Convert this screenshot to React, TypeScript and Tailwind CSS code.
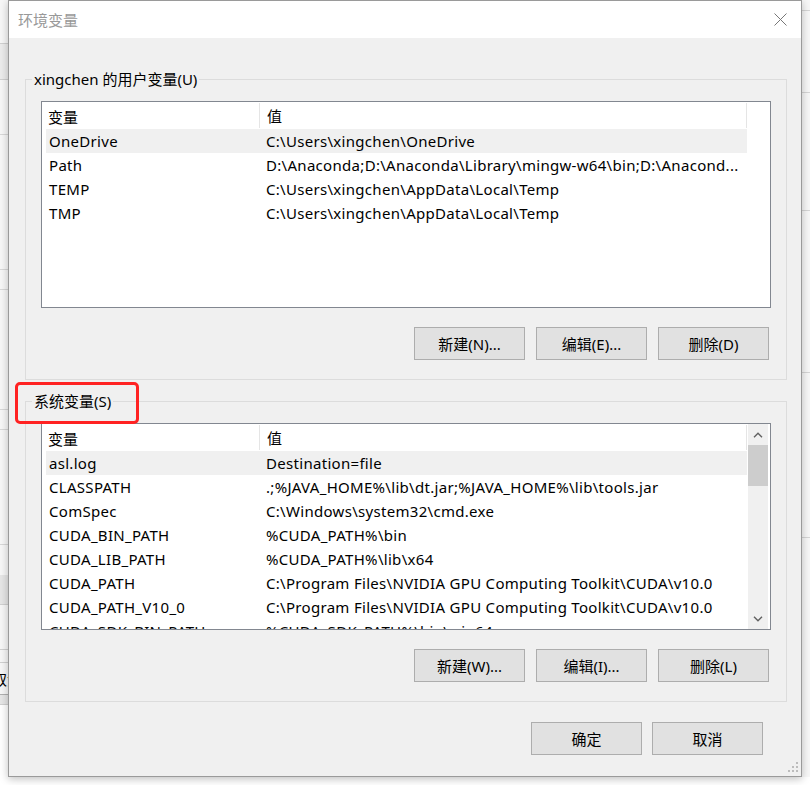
import React from 'react';

type Row = [string, string];

const userVars: Row[] = [
  ['OneDrive', 'C:\\Users\\xingchen\\OneDrive'],
  ['Path', 'D:\\Anaconda;D:\\Anaconda\\Library\\mingw-w64\\bin;D:\\Anacond...'],
  ['TEMP', 'C:\\Users\\xingchen\\AppData\\Local\\Temp'],
  ['TMP', 'C:\\Users\\xingchen\\AppData\\Local\\Temp'],
];

const sysVars: Row[] = [
  ['asl.log', 'Destination=file'],
  ['CLASSPATH', '.;%JAVA_HOME%\\lib\\dt.jar;%JAVA_HOME%\\lib\\tools.jar'],
  ['ComSpec', 'C:\\Windows\\system32\\cmd.exe'],
  ['CUDA_BIN_PATH', '%CUDA_PATH%\\bin'],
  ['CUDA_LIB_PATH', '%CUDA_PATH%\\lib\\x64'],
  ['CUDA_PATH', 'C:\\Program Files\\NVIDIA GPU Computing Toolkit\\CUDA\\v10.0'],
  ['CUDA_PATH_V10_0', 'C:\\Program Files\\NVIDIA GPU Computing Toolkit\\CUDA\\v10.0'],
  ['CUDA_SDK_BIN_PATH', '%CUDA_SDK_PATH%\\bin\\win64'],
];

function WinButton({ label }: { label: string }) {
  return (
    <button className="w-[111px] h-[33px] border border-[#adadad] bg-[#e1e1e1] text-[15px] leading-[20px] text-black">
      {label}
    </button>
  );
}

function Chevron({ up }: { up?: boolean }) {
  return (
    <svg width="10" height="6" viewBox="0 0 10 6" className="block">
      <path
        d={up ? 'M1 5.2 L5 1.2 L9 5.2' : 'M1 0.8 L5 4.8 L9 0.8'}
        fill="none"
        stroke="#606060"
        strokeWidth="1.4"
      />
    </svg>
  );
}

function VarList({ rows, scrollbar }: { rows: Row[]; scrollbar?: boolean }) {
  return (
    <div className="h-[207px] border border-[#828790] bg-white flex overflow-hidden">
      <div className="w-[705px] pl-[4px] shrink-0 overflow-hidden">
        {/* header */}
        <div className="h-[27px] flex text-[15px] leading-[20px]">
          <div className="w-[214px] pl-[2px] pt-[4px] border-r border-[#e5e5e5] mt-[1px] mb-[1px]">变量</div>
          <div className="flex-1 pl-[7px] pt-[3px] border-r border-[#e5e5e5] mt-[1px] mb-[1px]">值</div>
        </div>
        {rows.map(([name, value], i) => (
          <div
            key={name}
            className={
              'h-[24px] flex text-[15px] leading-[24px] tracking-[0.3px] whitespace-nowrap ' +
              (i === 0 ? 'bg-[#f0f0f0]' : '')
            }
          >
            <div className="w-[214px] pl-[3px] shrink-0 overflow-hidden">{name}</div>
            <div className="flex-1 pl-[6px] overflow-hidden">{value}</div>
          </div>
        ))}
      </div>
      {scrollbar && (
        <div className="w-[20px] ml-[1px] bg-[#f0f0f0] flex flex-col">
          <div className="h-[21px] flex items-center justify-center">
            <Chevron up />
          </div>
          <div className="h-[41px] bg-[#cdcdcd]" />
          <div className="flex-1" />
          <div className="h-[21px] flex items-center justify-center">
            <Chevron />
          </div>
        </div>
      )}
    </div>
  );
}

function Group({ title, rows, buttons, scrollbar }: { title: string; rows: Row[]; buttons: string[]; scrollbar?: boolean }) {
  return (
    <fieldset className="w-[762px] border border-[#dcdcdc] px-[15px] pb-[19px]">
      <legend className="-ml-[9px] px-[2px] text-[15px] leading-[20px] text-black">{title}</legend>
      <div className="mt-[12px]">
        <VarList rows={rows} scrollbar={scrollbar} />
      </div>
      <div className="mt-[19px] flex justify-end gap-[11px] pr-[2px]">
        {buttons.map((b) => (
          <WinButton key={b} label={b} />
        ))}
      </div>
    </fieldset>
  );
}

function BackStrip({ side }: { side: 'left' | 'right' }) {
  if (side === 'right') {
    return (
      <div className="flex-1 h-[777px] bg-[#f7f7f7] flex flex-col">
        <div className="h-[11px] border-b border-[#d5d5d5]" />
        <div className="h-[82px] border-b border-[#d5d5d5]" />
        <div className="h-[118px] border-b border-[#d5d5d5]" />
        <div className="h-[162px] border-b border-[#d5d5d5]" />
        <div className="h-[165px] border-b border-[#d5d5d5]" />
      </div>
    );
  }
  return (
    <div className="w-[8px] h-[785px] shrink-0 bg-[#f7f7f7] flex flex-col overflow-hidden">
      <div className="h-[44px] border-b border-[#d0d0d0]" />
      <div className="h-[36px] bg-[#ececec] border-b border-[#d0d0d0]" />
      <div className="h-[55px] border-b border-[#d8d8d8]" />
      <div className="h-[135px] border-b border-[#d8d8d8]" />
      <div className="h-[20px] border-b border-[#d8d8d8]" />
      <div className="h-[120px] border-b border-[#d8d8d8]" />
      <div className="h-[20px] border-b border-[#d8d8d8]" />
      <div className="h-[115px] border-b border-[#d8d8d8]" />
      <div className="h-[30px]" />
      <div className="h-[30px] bg-[#e6e6e6] border-b border-[#d0d0d0]" />
      <div className="h-[45px] border-b border-[#d0d0d0]" />
      <div className="h-[13px] border-b border-[#d0d0d0]" />
      <div className="h-[32px] border-b border-[#b0b0b0] whitespace-nowrap text-[15px] leading-[32px] -ml-[8px]">取消</div>
      <div className="h-[10px] bg-[#e6e6e6] border-b border-[#d0d0d0]" />
      <div className="flex-1 bg-white" />
    </div>
  );
}

export default function App() {
  return (
    <div className="w-[810px] h-[785px] bg-white flex overflow-hidden font-['Noto_Sans','Noto_Sans_CJK_SC',sans-serif] text-black">
      <BackStrip side="left" />

      {/* dialog */}
      <div className="relative w-[794px] h-[777px] shrink-0 border border-[#9a9a9a] bg-[#f0f0f0] flex flex-col shadow-[0_2px_8px_rgba(0,0,0,0.25)]">
        {/* title bar */}
        <div className="h-[37px] bg-white flex items-center justify-between pl-[9px] pr-[14px]">
          <span className="text-[15px] text-[#999999] leading-[20px]">环境变量</span>
          <svg width="13" height="13" viewBox="0 0 13 13">
            <path d="M0.5 0.5 L12.5 12.5 M12.5 0.5 L0.5 12.5" stroke="#777" strokeWidth="1" />
          </svg>
        </div>

        {/* body */}
        <div className="flex-1 pl-[16px] pt-[31px]">
          <Group
            title="xingchen 的用户变量(U)"
            rows={userVars}
            buttons={['新建(N)...', '编辑(E)...', '删除(D)']}
          />
          <div className="mt-[11px]">
            <Group
              title="系统变量(S)"
              rows={sysVars}
              buttons={['新建(W)...', '编辑(I)...', '删除(L)']}
              scrollbar
            />
          </div>
          <div className="w-[762px] mt-[20px] pr-[24px] flex justify-end gap-[10px]">
            <WinButton label="确定" />
            <WinButton label="取消" />
          </div>
        </div>

        {/* red highlight annotation */}
        <div className="absolute left-[6px] top-[381px] w-[124px] h-[42px] border-[3px] border-[#ff2222] rounded-[5px]" />

        {/* resize grip */}
        <svg className="absolute right-[2px] bottom-[3px]" width="11" height="11" viewBox="0 0 11 11">
          <rect x="8" y="0" width="2" height="2" fill="#bcbcbc" />
          <rect x="4" y="4" width="2" height="2" fill="#bcbcbc" />
          <rect x="8" y="4" width="2" height="2" fill="#bcbcbc" />
          <rect x="0" y="8" width="2" height="2" fill="#bcbcbc" />
          <rect x="4" y="8" width="2" height="2" fill="#bcbcbc" />
          <rect x="8" y="8" width="2" height="2" fill="#bcbcbc" />
        </svg>
      </div>

      <BackStrip side="right" />
    </div>
  );
}
